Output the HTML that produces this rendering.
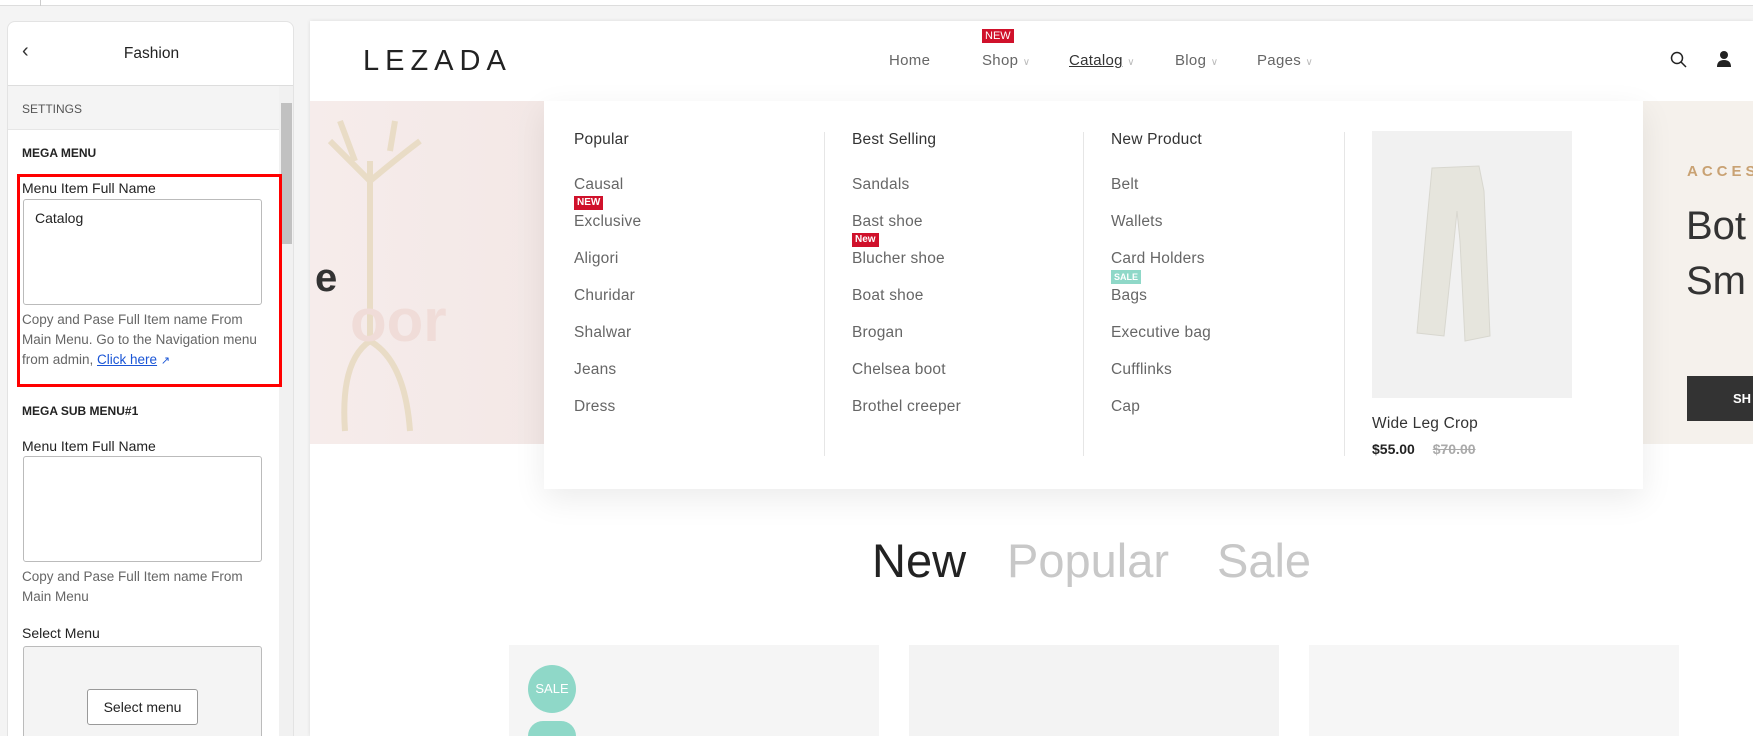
<!DOCTYPE html>
<html><head><meta charset="utf-8"><style>
*{margin:0;padding:0;box-sizing:border-box}
html{width:1753px;height:736px;overflow:hidden}
body{width:1753px;height:736px;overflow:hidden;background:#f4f4f4;font-family:"Liberation Sans",sans-serif;position:relative;color:#333}
.a{position:absolute}
.sb{left:7px;top:21px;width:287px;height:715px;background:#fff;border:1px solid #e3e3e3;border-bottom:none;border-radius:8px 8px 0 0;overflow:hidden}
.s{font-size:14px;color:#222;position:absolute}
.help{font-size:13.5px;color:#666;line-height:20px}
.ta{position:absolute;border:1px solid #bbb;border-radius:3px;background:#fff}
.mm{font-size:15.5px;color:#666;position:absolute;letter-spacing:.2px}
.hd{font-size:15.5px;color:#333;position:absolute;letter-spacing:.2px}
.tag{position:absolute;font-size:10px;font-weight:bold;color:#fff;padding:1px 3px;line-height:12px}
.nav{position:absolute;top:52px;font-size:15px;color:#666;letter-spacing:.3px}
.chev{color:#bbb;font-size:10px}
</style></head><body>
<div class="a" style="left:0;top:0;width:1753px;height:6px;background:#fff;border-bottom:1px solid #ddd"></div>
<div class="a" style="left:40px;top:0;width:1px;height:6px;background:#ccc"></div>

<div class="a sb">
  <div class="a" style="left:14px;top:18px;font-size:20px;color:#333">‹</div>
  <div class="s" style="left:0;width:287px;text-align:center;top:23px;font-size:15.5px">Fashion</div>
  <div class="a" style="left:0;top:63px;width:287px;height:45px;background:#f4f4f4;border-top:1px solid #ddd;border-bottom:1px solid #e6e6e6"></div>
  <div class="s" style="left:14px;top:80px;font-size:12px;color:#555">SETTINGS</div>
  <div class="a" style="left:271px;top:64px;width:15px;height:660px;background:#f1f1f1"></div>
  <div class="a" style="left:273px;top:81px;width:11px;height:141px;background:#c1c1c1"></div>
  <div class="s" style="left:14px;top:124px;font-size:12px;font-weight:bold">MEGA MENU</div>
  <div class="a" style="left:9px;top:152px;width:265px;height:213px;border:3px solid #f00"></div>
  <div class="s" style="left:14px;top:158px">Menu Item Full Name</div>
  <div class="ta" style="left:15px;top:177px;width:239px;height:106px"><span class="s" style="left:11px;top:10px">Catalog</span></div>
  <div class="a help" style="left:14px;top:288px;width:245px">Copy and Pase Full Item name From Main Menu. Go to the Navigation menu from admin, <span style="color:#1a55d6;text-decoration:underline">Click here</span> <span style="color:#1a55d6;font-size:11px">↗</span></div>
  <div class="s" style="left:14px;top:382px;font-size:12px;font-weight:bold">MEGA SUB MENU#1</div>
  <div class="s" style="left:14px;top:416px">Menu Item Full Name</div>
  <div class="ta" style="left:15px;top:434px;width:239px;height:106px"></div>
  <div class="a help" style="left:14px;top:545px;width:245px">Copy and Pase Full Item name From Main Menu</div>
  <div class="s" style="left:14px;top:603px">Select Menu</div>
  <div class="ta" style="left:15px;top:624px;width:239px;height:100px;background:#f4f4f4"></div>
  <div class="a" style="left:79px;top:667px;width:111px;height:36px;border:1px solid #999;border-radius:3px;background:#fff;font-size:14px;text-align:center;line-height:34px;color:#222">Select menu</div>
</div>

<div class="a" style="left:310px;top:21px;width:1443px;height:715px;background:#fff;box-shadow:0 0 4px rgba(0,0,0,.1)"></div>
<div class="a" style="left:363px;top:45px;font-size:29px;letter-spacing:6px;color:#222">LEZADA</div>
<div class="nav" style="left:889px">Home</div>
<div class="a tag" style="left:982px;top:29px;background:#d0112b;font-weight:normal;font-size:11px">NEW</div>
<div class="nav" style="left:982px">Shop <span class="chev">∨</span></div>
<div class="nav" style="left:1069px;color:#333;"><span style="text-decoration:underline">Catalog</span> <span class="chev">∨</span></div>
<div class="nav" style="left:1175px">Blog <span class="chev">∨</span></div>
<div class="nav" style="left:1257px">Pages <span class="chev">∨</span></div>
<svg class="a" style="left:1670px;top:51px" width="18" height="18"><circle cx="7" cy="7" r="5.5" fill="none" stroke="#222" stroke-width="1.5"/><line x1="11" y1="11" x2="16" y2="16" stroke="#222" stroke-width="1.5"/></svg>
<svg class="a" style="left:1716px;top:50px" width="16" height="18"><circle cx="8" cy="5" r="4" fill="#222"/><path d="M1 17 Q1 10 8 10 Q15 10 15 17Z" fill="#222"/></svg>

<div class="a" style="left:310px;top:101px;width:236px;height:343px;background:linear-gradient(90deg,#f6eceb,#f3e8e6)"></div>
<svg class="a" style="left:310px;top:101px" width="236" height="343"><g fill="none" stroke="#e9dcc6" stroke-width="6"><path d="M60 240 L60 60 M60 80 Q40 60 20 40 M60 80 Q90 55 110 40 M45 60 L30 20 M80 50 L85 20 M60 240 Q30 260 35 330 M60 240 Q95 260 100 330"/></g><text x="5" y="190" font-size="40" fill="#333" font-family="Liberation Sans" font-weight="bold">e</text><text x="40" y="240" font-size="60" fill="#f0dcd8" font-family="Liberation Sans" font-weight="bold">oor</text></svg>
<div class="a" style="left:1643px;top:101px;width:110px;height:343px;background:#f5f1ec"></div>
<div class="a" style="left:1687px;top:163px;font-size:15px;letter-spacing:4px;color:#c9a273;font-weight:bold">ACCES</div>
<div class="a" style="left:1686px;top:204px;font-size:40px;color:#333;white-space:nowrap">Bot</div>
<div class="a" style="left:1686px;top:259px;font-size:40px;color:#333">Sm</div>
<div class="a" style="left:1687px;top:376px;width:66px;height:45px;background:#333;color:#fff;font-size:13px;font-weight:bold;padding:15px 0 0 46px">SH</div>

<div class="a" style="left:544px;top:101px;width:1099px;height:388px;background:#fff;box-shadow:0 10px 30px rgba(0,0,0,.08)"></div>
<div class="a" style="left:824px;top:132px;width:1px;height:324px;background:#e6e6e6"></div>
<div class="a" style="left:1083px;top:132px;width:1px;height:324px;background:#e6e6e6"></div>
<div class="a" style="left:1344px;top:132px;width:1px;height:324px;background:#e6e6e6"></div>
<div class="hd" style="left:574px;top:131px">Popular</div>
<div class="hd" style="left:852px;top:131px">Best Selling</div>
<div class="hd" style="left:1111px;top:131px">New Product</div>

<div class="mm" style="left:574px;top:176px">Causal</div>
<div class="tag" style="left:574px;top:196px;background:#d0112b">NEW</div>
<div class="mm" style="left:574px;top:213px">Exclusive</div>
<div class="mm" style="left:574px;top:250px">Aligori</div>
<div class="mm" style="left:574px;top:287px">Churidar</div>
<div class="mm" style="left:574px;top:324px">Shalwar</div>
<div class="mm" style="left:574px;top:361px">Jeans</div>
<div class="mm" style="left:574px;top:398px">Dress</div>

<div class="mm" style="left:852px;top:176px">Sandals</div>
<div class="mm" style="left:852px;top:213px">Bast shoe</div>
<div class="tag" style="left:852px;top:233px;background:#d0112b">New</div>
<div class="mm" style="left:852px;top:250px">Blucher shoe</div>
<div class="mm" style="left:852px;top:287px">Boat shoe</div>
<div class="mm" style="left:852px;top:324px">Brogan</div>
<div class="mm" style="left:852px;top:361px">Chelsea boot</div>
<div class="mm" style="left:852px;top:398px">Brothel creeper</div>

<div class="mm" style="left:1111px;top:176px">Belt</div>
<div class="mm" style="left:1111px;top:213px">Wallets</div>
<div class="mm" style="left:1111px;top:250px">Card Holders</div>
<div class="tag" style="left:1111px;top:270px;background:#8fd8c8;font-size:9px">SALE</div>
<div class="mm" style="left:1111px;top:287px">Bags</div>
<div class="mm" style="left:1111px;top:324px">Executive bag</div>
<div class="mm" style="left:1111px;top:361px">Cufflinks</div>
<div class="mm" style="left:1111px;top:398px">Cap</div>

<div class="a" style="left:1372px;top:131px;width:200px;height:267px;background:#f1f1f1"></div>
<svg class="a" style="left:1372px;top:131px" width="200" height="267"><path d="M60 37 L107 35 L112 60 L118 205 L93 210 L88 110 L85 80 L82 110 L72 205 L45 202 L55 90Z" fill="#e6e5dd" stroke="#d8d7cf"/></svg>
<div class="hd" style="left:1372px;top:415px;color:#333">Wide Leg Crop</div>
<div class="a" style="left:1372px;top:441px;font-size:14px;font-weight:bold;color:#222">$55.00 <span style="color:#aaa;text-decoration:line-through;margin-left:14px">$70.00</span></div>

<div class="a" style="left:872px;top:533px;font-size:47px;color:#222">New</div>
<div class="a" style="left:1007px;top:533px;font-size:47px;color:#c8c8c8">Popular</div>
<div class="a" style="left:1217px;top:533px;font-size:47px;color:#c8c8c8">Sale</div>

<div class="a" style="left:509px;top:645px;width:370px;height:91px;background:#f5f5f5"></div>
<div class="a" style="left:909px;top:645px;width:370px;height:91px;background:#f3f3f3"></div>
<div class="a" style="left:1309px;top:645px;width:370px;height:91px;background:#f6f6f6"></div>
<div class="a" style="left:528px;top:665px;width:48px;height:48px;border-radius:50%;background:#8fd8c8;color:#fff;font-size:13px;text-align:center;line-height:48px">SALE</div>
<div class="a" style="left:528px;top:721px;width:48px;height:15px;border-radius:24px 24px 0 0;background:#8fd8c8"></div>
</body></html>
